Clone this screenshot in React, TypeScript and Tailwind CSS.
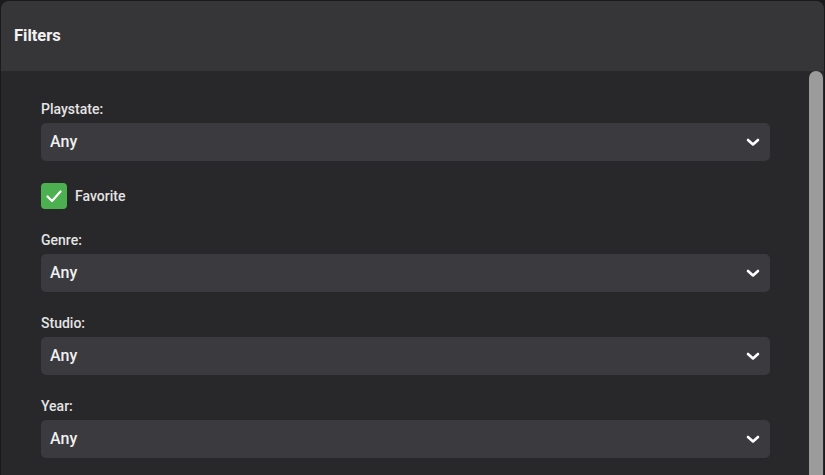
import React from "react";

function Chevron() {
  return (
    <svg width="14" height="9" viewBox="0 0 14 9" className="shrink-0">
      <path d="M2 2 L7 6.5 L12 2" fill="none" stroke="#ffffff" strokeWidth="2.6" strokeLinecap="round" strokeLinejoin="round" />
    </svg>
  );
}

function Field({ label, first }: { label: string; first?: boolean }) {
  return (
    <div className={first ? "" : "mt-[22px]"}>
      <div className="h-[18px] leading-[18px] text-[14px] font-medium text-[#e4e4e4] mb-[5px]">{label}</div>
      <div className="h-[38px] rounded-[5px] bg-[#3a3a3f] flex items-center justify-between pl-[9px] pr-[10px]">
        <span className="text-[16px] font-medium text-[#f0f0f0]">Any</span>
        <Chevron />
      </div>
    </div>
  );
}

export default function App() {
  return (
    <div
      className="w-[825px] h-[475px] bg-[#1a1a1c] pt-px pl-px overflow-hidden"
      style={{ fontFamily: "Roboto, 'Noto Sans', sans-serif" }}
    >
      <div className="w-[823px] h-[474px] rounded-t-[8px] overflow-hidden flex flex-col bg-[#28282b]">
        <div className="h-[70px] shrink-0 bg-[#363639] flex items-center pl-[13px]">
          <span className="text-[16.5px] font-bold text-[#f2f2f2]">Filters</span>
        </div>
        <div className="flex flex-1 min-h-0">
          <div className="flex-1 pl-[40px] pr-[39px] pt-[29px]">
            <Field label="Playstate:" first />
            <div className="mt-[22px] flex items-center h-[26px]">
              <div className="w-[26px] h-[26px] rounded-[4px] bg-[#4caf50] flex items-center justify-center">
                <svg width="20" height="20" viewBox="0 0 20 20">
                  <path d="M3.5 10.5 L8 15 L16.5 5.5" fill="none" stroke="#ffffff" strokeWidth="2.2" strokeLinecap="round" strokeLinejoin="round" />
                </svg>
              </div>
              <span className="ml-[8px] text-[14px] font-medium text-[#e4e4e4]">Favorite</span>
            </div>
            <Field label="Genre:" />
            <Field label="Studio:" />
            <Field label="Year:" />
          </div>
          <div className="w-[15px] shrink-0 pr-px">
            <div className="w-[14px] h-full rounded-t-[7px] bg-[#9b9b9b]" />
          </div>
        </div>
      </div>
    </div>
  );
}
